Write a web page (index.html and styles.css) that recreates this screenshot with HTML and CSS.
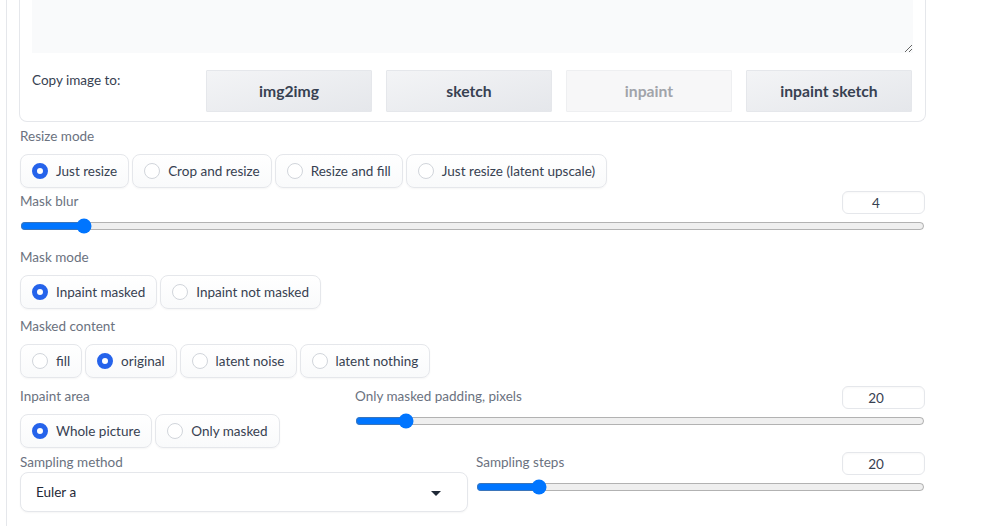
FILE: index.html
```html
<!DOCTYPE html>
<html>
<head>
<meta charset="utf-8">
<link rel="stylesheet" href="styles.css">
</head>
<body>
<div class="page">
  <div class="panel">
    <textarea class="info"></textarea>
    <div class="copy-row">
      <span class="copy-label">Copy image to:</span>
      <button class="btn">img2img</button>
      <button class="btn">sketch</button>
      <button class="btn btn-disabled" disabled>inpaint</button>
      <button class="btn">inpaint sketch</button>
    </div>
  </div>

  <div class="block">
    <div class="label">Resize mode</div>
    <div class="radio-group">
      <label class="radio"><span class="dot checked"></span>Just resize</label>
      <label class="radio"><span class="dot"></span>Crop and resize</label>
      <label class="radio"><span class="dot"></span>Resize and fill</label>
      <label class="radio"><span class="dot"></span>Just resize (latent upscale)</label>
    </div>
  </div>

  <div class="slider-block mask-blur">
    <div class="slider-head"><span class="label">Mask blur</span><input class="num" type="number" value="4"></div>
    <input class="range" type="range" min="0" max="64" value="4">
  </div>

  <div class="block mask-mode">
    <div class="label">Mask mode</div>
    <div class="radio-group">
      <label class="radio"><span class="dot checked"></span>Inpaint masked</label>
      <label class="radio"><span class="dot"></span>Inpaint not masked</label>
    </div>
  </div>

  <div class="block masked-content">
    <div class="label">Masked content</div>
    <div class="radio-group">
      <label class="radio"><span class="dot"></span>fill</label>
      <label class="radio"><span class="dot checked"></span>original</label>
      <label class="radio"><span class="dot"></span>latent noise</label>
      <label class="radio"><span class="dot"></span>latent nothing</label>
    </div>
  </div>

  <div class="row inpaint-row">
    <div class="block col-area">
      <div class="label">Inpaint area</div>
      <div class="radio-group">
        <label class="radio"><span class="dot checked"></span>Whole picture</label>
        <label class="radio"><span class="dot"></span>Only masked</label>
      </div>
    </div>
    <div class="slider-block col-grow">
      <div class="slider-head"><span class="label">Only masked padding, pixels</span><input class="num" type="number" value="20"></div>
      <input class="range" type="range" min="0" max="256" value="20">
    </div>
  </div>

  <div class="row">
    <div class="col-sampler">
      <div class="label label-tight">Sampling method</div>
      <div class="select">
        <span>Euler a</span>
        <svg class="caret" width="10" height="5" viewBox="0 0 10 5"><path d="M0 0H10L5 5Z" fill="#1f2937"/></svg>
      </div>
    </div>
    <div class="slider-block col-grow">
      <div class="slider-head"><span class="label">Sampling steps</span><input class="num" type="number" value="20"></div>
      <input class="range" type="range" min="1" max="150" value="20">
    </div>
  </div>
</div>
</body>
</html>
```

FILE: styles.css
```css
html, body {
  margin: 0;
  background: #ffffff;
}

body {
  font-family: Lato, "Open Sans", sans-serif;
  color: #374151;
  font-size: 13.5px;
}

.page {
  margin-left: 6px;
  border-left: 1px solid #e5e7eb;
  padding-left: 12px;
  width: 906px;
  min-height: 526px;
  display: flex;
  flex-direction: column;
  gap: 4px;
}

.page > :not(.panel) {
  margin-left: 1px;
}

.panel {
  border: 1px solid #e5e7eb;
  border-top: none;
  border-radius: 0 0 8px 8px;
  padding: 0 12px 9px;
  margin-right: -1px;
}

.info {
  display: block;
  box-sizing: border-box;
  width: 881px;
  height: 53px;
  margin: 0;
  border: none;
  background: #f9fafb;
  resize: vertical;
  outline: none;
}

.copy-row {
  display: grid;
  grid-template-columns: 160px repeat(4, 166px);
  column-gap: 14px;
  margin-top: 17px;
  height: 42px;
}

.copy-label {
  font-size: 13.5px;
  line-height: 20px;
  color: #374151;
}

.btn {
  font-family: inherit;
  font-size: 15.7px;
  font-weight: 700;
  color: #374151;
  border: 1px solid #e5e7eb;
  border-radius: 1px;
  background: linear-gradient(to bottom right, #f3f4f6, #e5e7eb);
  padding: 0;
  height: 42px;
}

.btn-disabled {
  background: #f7f7f8;
  border-color: #eeeff1;
  color: #a1a4aa;
}

.label {
  font-size: 13.5px;
  line-height: 20px;
  color: #6b7280;
  margin-bottom: 8px;
}

.label-tight {
  margin-bottom: 0;
}

.radio-group {
  display: flex;
  gap: 3px;
}

.radio {
  display: flex;
  align-items: center;
  gap: 8px;
  box-sizing: border-box;
  height: 34px;
  padding: 0 11px;
  border: 1px solid #e5e7eb;
  border-radius: 8px;
  background: linear-gradient(to bottom, #ffffff, #f9fafb);
  box-shadow: 0 1px 2px rgba(0, 0, 0, 0.04);
  font-size: 13.5px;
  line-height: 20px;
  color: #374151;
  white-space: nowrap;
}

.dot {
  width: 16px;
  height: 16px;
  box-sizing: border-box;
  border: 1px solid #d1d5db;
  border-radius: 50%;
  background: #ffffff;
  flex: none;
}

.dot.checked {
  border: 5px solid #2563eb;
}

.slider-head {
  display: flex;
  justify-content: space-between;
  align-items: flex-start;
  height: 23px;
}

.slider-head .label {
  margin: 0;
}

.num {
  box-sizing: border-box;
  width: 83px;
  height: 23px;
  margin: 0;
  padding: 0 2px;
  border: 1px solid #e5e7eb;
  border-radius: 6px;
  font-family: inherit;
  font-size: 13.5px;
  color: #374151;
  text-align: center;
  background: #fff;
  box-shadow: inset 0 1px 2px rgba(0, 0, 0, 0.03);
}

.range {
  display: block;
  width: 100%;
  height: 16px;
  margin: 4px 0 0 0;
}

.mask-blur {
  margin-top: -1px;
}

.mask-mode {
  margin-top: 9px;
}

.masked-content {
  margin-top: 3px;
}

.inpaint-row {
  margin-top: 4px;
}

.row {
  display: flex;
  gap: 8px;
}

.col-area {
  width: 327px;
  flex: none;
}

.col-sampler {
  width: 448px;
  flex: none;
}

.col-grow {
  flex: 1;
  min-width: 0;
}

.select {
  box-sizing: border-box;
  height: 40px;
  display: flex;
  align-items: center;
  justify-content: space-between;
  padding: 0 26px 0 15px;
  border: 1px solid #e5e7eb;
  border-radius: 8px;
  background: #fff;
  box-shadow: 0 1px 2px rgba(0, 0, 0, 0.04);
  font-size: 13.5px;
  color: #1f2937;
}

.caret {
  display: block;
  margin-top: 2px;
}
```
